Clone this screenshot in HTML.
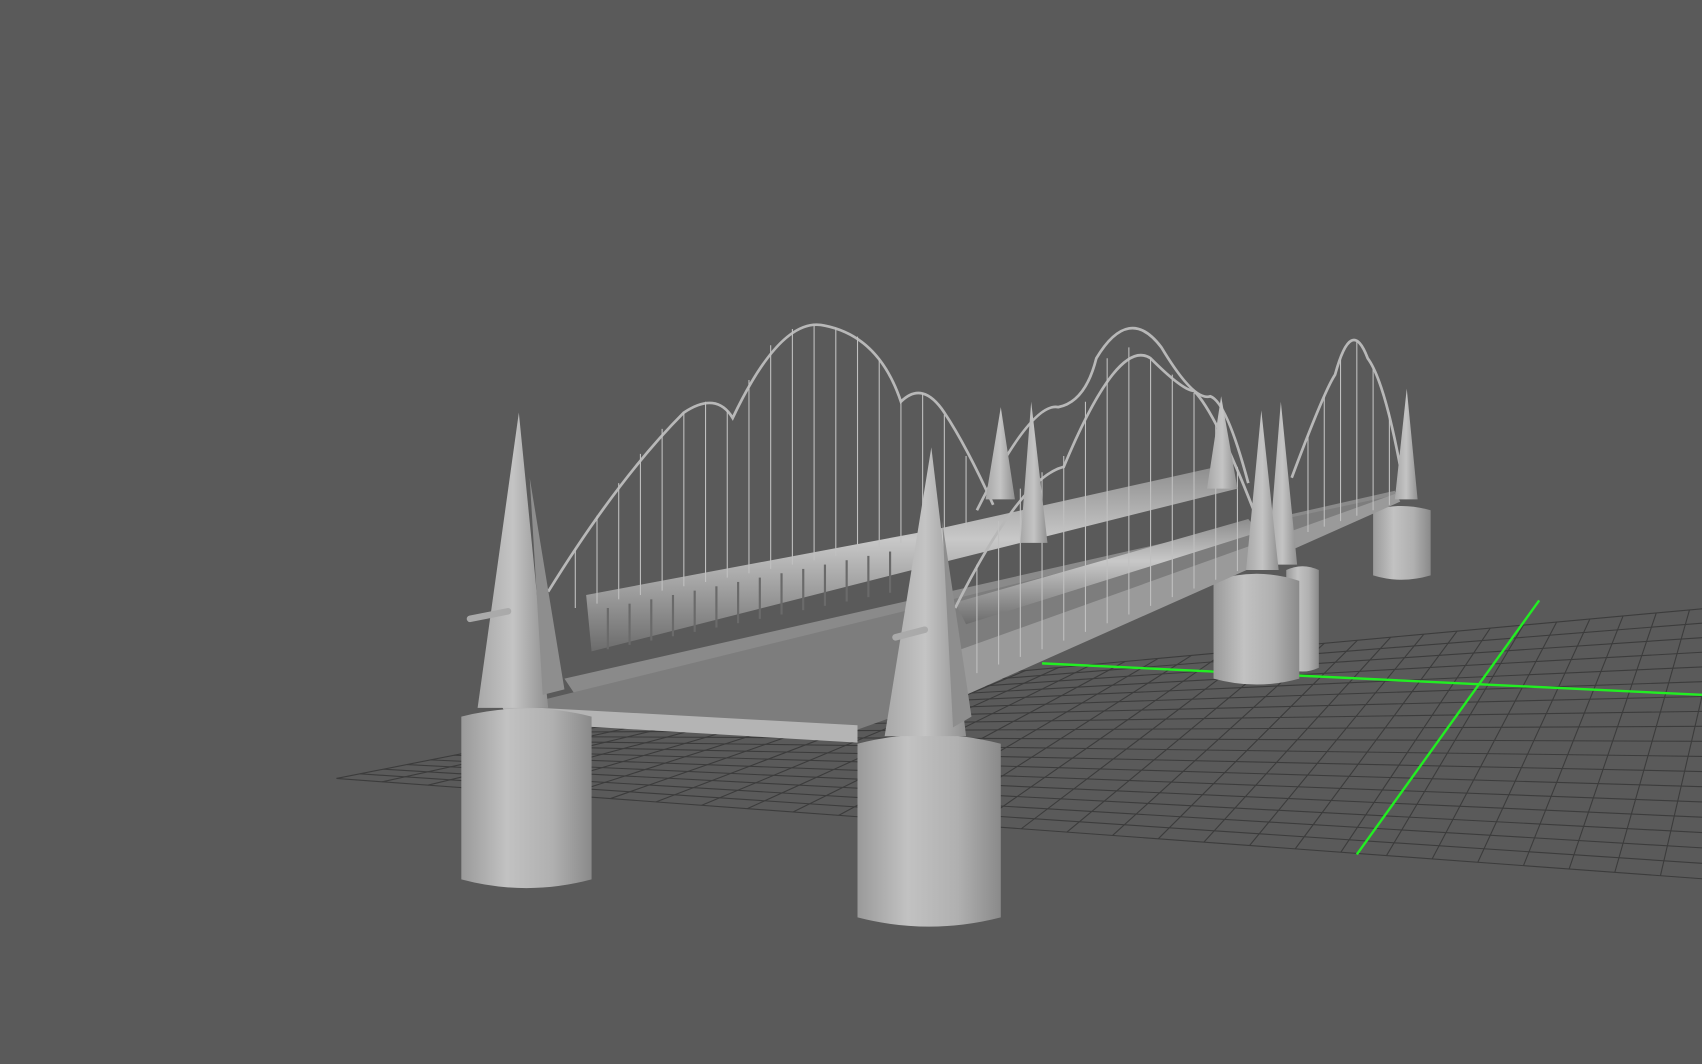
<!DOCTYPE html>
<html><head><meta charset="utf-8"><style>
html,body{margin:0;padding:0;background:#5a5a5a;overflow:hidden}
svg{display:block}
</style></head><body>
<svg id="s" width="1702" height="1064" viewBox="0 0 1568 980" preserveAspectRatio="none" xmlns="http://www.w3.org/2000/svg">
<rect width="1568" height="980" fill="#5a5a5a"/>
<defs>
<linearGradient id="cyl" x1="0" x2="1" y1="0" y2="0">
<stop offset="0" stop-color="#9a9a9a"/><stop offset="0.35" stop-color="#c2c2c2"/><stop offset="0.7" stop-color="#b0b0b0"/><stop offset="1" stop-color="#8a8a8a"/></linearGradient>
<linearGradient id="tow" x1="0" x2="1" y1="0" y2="0">
<stop offset="0" stop-color="#a8a8a8"/><stop offset="0.5" stop-color="#c4c4c4"/><stop offset="1" stop-color="#909090"/></linearGradient>
<linearGradient id="rail" x1="0" x2="0" y1="0" y2="1">
<stop offset="0" stop-color="#8c8c8c"/><stop offset="0.4" stop-color="#c8c8c8"/><stop offset="1" stop-color="#6c6c6c"/></linearGradient>
</defs>
<g id="grid" stroke="#3c3c3c" stroke-width="1" fill="none"></g>
<g stroke="#22ee22" stroke-width="2.2">
<line x1="960" y1="611" x2="1568" y2="640"/>
<line x1="1418" y1="553" x2="1250" y2="787"/>
</g>
<g fill="url(#cyl)">
<path d="M1265 470 Q1291 462 1318 470 L1318 530 Q1291 538 1265 530Z"/>
<path d="M1185 525 Q1200 518 1215 525 L1215 615 Q1200 622 1185 615Z"/>
<path d="M1118 535 Q1158 522 1197 535 L1197 625 Q1158 636 1118 625Z"/>
</g>
<polygon points="520,625 1285,452 1290,462 530,640" fill="#8a8a8a"/>
<polygon points="470,652 1150,485 1290,455 880,640 790,672" fill="#7d7d7d"/>
<polygon points="540,548 860,488 1130,428 1140,450 860,520 545,600" fill="url(#rail)"/>
<polygon points="880,555 1150,478 1160,490 890,575" fill="url(#rail)"/>
<g stroke="#6a6a6a" stroke-width="2">
<line x1="560" y1="560" x2="560" y2="598"/><line x1="580" y1="556" x2="580" y2="594"/><line x1="600" y1="552" x2="600" y2="590"/><line x1="620" y1="548" x2="620" y2="586"/><line x1="640" y1="544" x2="640" y2="582"/><line x1="660" y1="540" x2="660" y2="578"/><line x1="680" y1="536" x2="680" y2="574"/><line x1="700" y1="532" x2="700" y2="570"/><line x1="720" y1="528" x2="720" y2="566"/><line x1="740" y1="524" x2="740" y2="562"/><line x1="760" y1="520" x2="760" y2="558"/><line x1="780" y1="516" x2="780" y2="554"/><line x1="800" y1="512" x2="800" y2="550"/><line x1="820" y1="508" x2="820" y2="546"/>
</g>
<polygon points="880,600 1285,455 1290,462 890,640" fill="#9a9a9a"/>
<polygon points="462,650 790,668 790,684 470,665" fill="#b4b4b4"/>
<g fill="none" stroke="#b8b8b8" stroke-width="2.5">
<path d="M505 545 Q570 440 630 380 Q660 360 675 385 Q720 290 760 300 Q810 310 830 370 Q850 350 870 380 Q890 410 915 465"/>
<path d="M900 470 Q950 370 975 375 Q1000 370 1010 330 Q1040 280 1070 320 Q1100 370 1115 365 Q1130 370 1150 445"/>
<path d="M1190 440 Q1220 360 1230 345 Q1245 290 1260 330 Q1275 350 1290 430"/>
<path d="M880 560 Q940 440 980 430 Q1030 310 1060 330 Q1090 360 1100 360 Q1120 380 1155 470"/>
</g>
<g stroke="#c0c0c0" stroke-width="1">
<line x1="530" y1="505" x2="530" y2="560"/><line x1="550" y1="475" x2="550" y2="556"/><line x1="570" y1="445" x2="570" y2="552"/><line x1="590" y1="418" x2="590" y2="548"/><line x1="610" y1="395" x2="610" y2="544"/><line x1="630" y1="380" x2="630" y2="540"/><line x1="650" y1="370" x2="650" y2="536"/><line x1="670" y1="378" x2="670" y2="532"/><line x1="690" y1="350" x2="690" y2="528"/><line x1="710" y1="318" x2="710" y2="524"/><line x1="730" y1="303" x2="730" y2="520"/><line x1="750" y1="300" x2="750" y2="516"/><line x1="770" y1="302" x2="770" y2="512"/><line x1="790" y1="310" x2="790" y2="508"/><line x1="810" y1="330" x2="810" y2="504"/><line x1="830" y1="368" x2="830" y2="500"/><line x1="850" y1="362" x2="850" y2="496"/><line x1="870" y1="382" x2="870" y2="492"/><line x1="890" y1="420" x2="890" y2="488"/>
<line x1="900" y1="520" x2="900" y2="620"/><line x1="920" y1="480" x2="920" y2="612"/><line x1="940" y1="450" x2="940" y2="605"/><line x1="960" y1="435" x2="960" y2="598"/><line x1="980" y1="420" x2="980" y2="590"/><line x1="1000" y1="370" x2="1000" y2="582"/><line x1="1020" y1="330" x2="1020" y2="574"/><line x1="1040" y1="320" x2="1040" y2="566"/><line x1="1060" y1="330" x2="1060" y2="558"/><line x1="1080" y1="345" x2="1080" y2="550"/><line x1="1100" y1="362" x2="1100" y2="542"/><line x1="1120" y1="390" x2="1120" y2="534"/><line x1="1140" y1="430" x2="1140" y2="526"/>
<line x1="1205" y1="400" x2="1205" y2="490"/><line x1="1220" y1="365" x2="1220" y2="485"/><line x1="1235" y1="330" x2="1235" y2="480"/><line x1="1250" y1="315" x2="1250" y2="475"/><line x1="1265" y1="340" x2="1265" y2="470"/><line x1="1280" y1="380" x2="1280" y2="465"/>
</g>
<g fill="url(#tow)">
<polygon points="1296,358 1285,460 1306,460"/>
<polygon points="1180,370 1168,520 1195,520"/>
<polygon points="1162,378 1148,525 1178,525"/>
<polygon points="1125,365 1112,450 1140,450"/>
<polygon points="922,375 908,460 935,460"/>
<polygon points="950,370 940,500 965,500"/>
</g>
<path d="M425 660 Q485 645 545 660 L545 810 Q485 826 425 810Z" fill="url(#cyl)"/>
<path d="M790 685 Q856 668 922 685 L922 845 Q856 862 790 845Z" fill="url(#cyl)"/>
<polygon points="478,380 440,652 505,652" fill="url(#tow)"/>
<polygon points="488,440 500,640 520,635" fill="#8e8e8e"/>
<polygon points="858,412 815,678 890,678" fill="url(#tow)"/>
<polygon points="868,480 878,670 895,660" fill="#8e8e8e"/>
<g stroke="#aaaaaa" stroke-width="6" stroke-linecap="round">
<line x1="433" y1="570" x2="468" y2="563"/><line x1="825" y1="587" x2="852" y2="580"/>
</g>
</svg>
<script>
(function(){
 var g=document.getElementById('grid');
 var L=[310,717],NR=[1740,822],FR=[1740,545],FL=[700,640];
 function lerp(a,b,t){return [a[0]+(b[0]-a[0])*t,a[1]+(b[1]-a[1])*t];}
 var n=34,m=18,h='';
 for(var i=0;i<=n;i++){var t=i/n;var a=lerp(L,NR,t),b=lerp(FL,FR,t);
  h+='<line x1="'+a[0]+'" y1="'+a[1]+'" x2="'+b[0]+'" y2="'+b[1]+'"/>';}
 for(var j=0;j<=m;j++){var t=j/m;var a=lerp(L,FL,t),b=lerp(NR,FR,t);
  h+='<line x1="'+a[0]+'" y1="'+a[1]+'" x2="'+b[0]+'" y2="'+b[1]+'"/>';}
 g.innerHTML=h;
})();
</script>
</body></html>
